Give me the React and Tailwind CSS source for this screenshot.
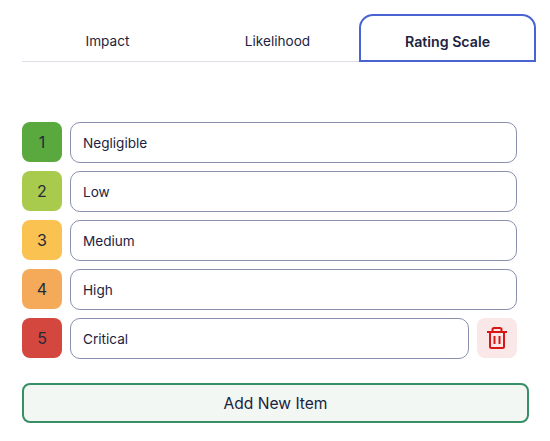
import React from 'react';

const FONT = 'font-["Inter",sans-serif]';

const ITEMS = [
  { n: 1, label: 'Negligible', color: 'bg-[#5aa93f]' },
  { n: 2, label: 'Low', color: 'bg-[#a8cb4d]' },
  { n: 3, label: 'Medium', color: 'bg-[#fac251]' },
  { n: 4, label: 'High', color: 'bg-[#f5aa59]' },
  { n: 5, label: 'Critical', color: 'bg-[#d4473f]' },
];

function TrashIcon() {
  return (
    <svg width="20" height="22" viewBox="0 0 20 22" fill="none" stroke="#d81616" strokeWidth="2">
      <path d="M0 5H20" />
      <path d="M5.500 5V2.500A1.500 1.500 0 0 1 7 1h6a1.500 1.500 0 0 1 1.500 1.500V5" />
      <path d="M3 5v14.500A1.500 1.500 0 0 0 4.500 21h11a1.500 1.500 0 0 0 1.500-1.500V5" />
      <path d="M7.500 9v8" />
      <path d="M12.500 9v8" />
    </svg>
  );
}

export default function App() {
  return (
    <div className={`w-[550px] h-[441px] bg-white px-[22px] pt-[14px] overflow-hidden text-[#1c2340] ${FONT}`}>
      {/* Tabs */}
      <div className="flex w-[515px] h-[48px] items-stretch">
        <div className="w-[171px] border-b border-[#dedeea] flex items-center justify-center text-[13.6px] pt-[7px]">Impact</div>
        <div className="w-[167px] border-b border-[#dedeea] flex items-center justify-center text-[13.6px] pt-[7px] pl-[2px]">Likelihood</div>
        <div className="w-[177px] -ml-px border-2 border-[#4a63d3] rounded-t-[14px] flex items-center justify-center text-[14.2px] font-semibold pt-[7px]">Rating Scale</div>
      </div>

      {/* Scale rows */}
      <div className="mt-[60px] flex flex-col gap-[8px] w-[495px]">
        {ITEMS.map((item) => (
          <div key={item.n} className="flex gap-[8px] items-start">
            <div className={`w-[40px] h-[40px] shrink-0 rounded-[8px] flex items-center justify-center text-[16px] text-[#252a3a] ${item.color}`}>
              {item.n}
            </div>
            <div className="flex-1 h-[41px] rounded-[10px] border border-[#8a90ae] bg-white flex items-center px-[12px] pt-[2px] text-[13.6px]">
              {item.label}
            </div>
            {item.n === 5 && (
              <button className="w-[40px] h-[40px] shrink-0 rounded-[8px] bg-[#fae8e8] flex items-center justify-center">
                <TrashIcon />
              </button>
            )}
          </div>
        ))}
      </div>

      {/* Add button */}
      <button className="mt-[24px] w-[507px] h-[40px] rounded-[8px] border-2 border-[#388e65] bg-[#f2f7f3] flex items-center justify-center pt-[2px] text-[15.6px]">
        Add New Item
      </button>
    </div>
  );
}
